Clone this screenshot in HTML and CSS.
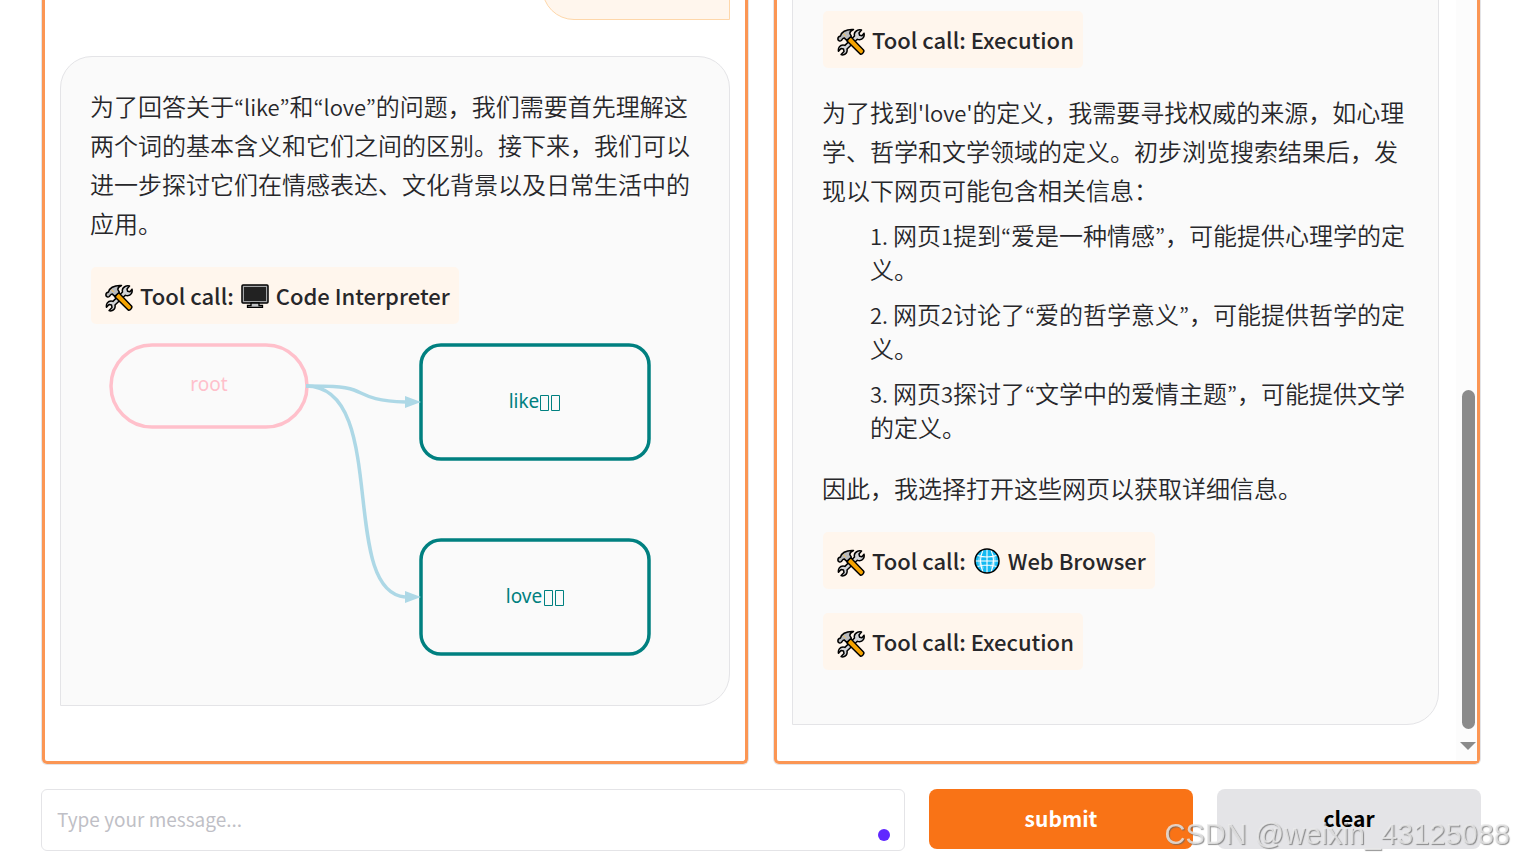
FILE: index.html
```html
<!DOCTYPE html>
<html lang="zh-CN">
<head>
  <meta charset="UTF-8" />
  <meta name="viewport" content="width=device-width, initial-scale=1.0" />
  <title>Chat</title>
  <link rel="stylesheet" href="styles.css">
</head>
<body>
  <svg class="defs" aria-hidden="true">
    <symbol id="tools" viewBox="0 0 28 28">
      <path d="M20 2.500c2-1.200 4.500-.5 4.500-.5L22 5l.6 2.200 2.400.5 2-2.500c.8 3-1 6.500-4.500 6.500-1 0-1.500-.2-2.200-.4L10 21c.6 3-1 5.800-4.300 5.900-1 0-1.600-.3-1.600-.3L7 23.500 6.500 21 4 20.500l-2.500 2.800c-.7-3.500 1.400-6.300 4.500-6.300.8 0 1.400.2 1.900.4L17.500 8c-.6-2.500.6-4.500 2.500-5.500z" fill="#d3d5d8" stroke="#000" stroke-width="1.500" stroke-linejoin="round"/>
      <path d="M11 11.500l2.800-2.700L26.500 22c1.300 1.500-1.300 4.800-3.300 4L10 13z" fill="#f5a300" stroke="#000" stroke-width="1.500" stroke-linejoin="round"/>
      <path d="M12.500 10.500L24.500 23" stroke="#f5a300" stroke-width="2.500"/>
      <path d="M1 11.500C.5 9.500 2 8.500 3.500 8c.5-3.500 5-7 13-6.500-2 .8-4 2-3.600 4.200l1.400 2.500-4.500 4.200-2.700-2.500c-1.500 0-1.600 1.200-2.800 2.600-1.300 1-3 .3-3.300-1z" fill="#b8babd" stroke="#000" stroke-width="1.500" stroke-linejoin="round"/>
      <path d="M6 5.500l3 2.500" stroke="#f5c35b" stroke-width="1"/>
    </symbol>
    <symbol id="desktop" viewBox="0 0 28 28">
      <rect x="1" y="3" width="26" height="18" rx="1" fill="#a5a7a9" stroke="#000" stroke-width="1.500"/>
      <rect x="3" y="5" width="22" height="14" fill="#222"/>
      <path d="M10 21h8v2.500h3.500v1.800h-15v-1.800H10z" fill="#c0c2c4" stroke="#000" stroke-width="1.300"/>
    </symbol>
    <symbol id="globe" viewBox="0 0 28 28">
      <circle cx="14" cy="14" r="12" fill="#14baf2"/>
      <path d="M9 6l-4 6 .5 5 4.500 5 1-1-4-8zM20 7l3 4-1 7-4 4-1-3 3-6z" fill="#6bd5f8"/>
      <path d="M14 2v24M2 14h24M4.500 8.500q9.500 3 19 0M4.500 19.500q9.500-3 19 0M10 3q-5 11 0 22M18 3q5 11 0 22" fill="none" stroke="#fff" stroke-width="1.100"/>
      <circle cx="14" cy="14" r="12" fill="none" stroke="#000" stroke-width="1.500"/>
    </symbol>
  </svg>

  <main class="chats">
    <section class="panel">
      <div class="messages">
        <div class="bubble user"></div>
        <div class="bubble bot">
          <p>为了回答关于<span class="en" lang="en">“like”</span>和<span class="en" lang="en">“love”</span>的问题，我们需要首先理解这两个词的基本含义和它们之间的区别。接下来，我们可以进一步探讨它们在情感表达、文化背景以及日常生活中的应用。</p>
          <div class="tool">
            <svg class="icon low"><use href="#tools"/></svg>
            <span>Tool call:</span>
            <svg class="icon"><use href="#desktop"/></svg>
            <span>Code Interpreter</span>
          </div>
          <svg class="graph" viewBox="0 0 610 351" role="img" aria-label="root, like, love">
            <rect class="root" x="21" y="21" width="196" height="82" rx="41"/>
            <text class="root-text" x="119" y="67">root</text>
            <rect class="leaf" x="331" y="21" width="228" height="114" rx="20"/>
            <text class="leaf-text" x="434" y="84">like</text>
            <path class="tofu" d="M450.500 71.500h8v15h-8zM461.500 71.500h8v15h-8z"/>
            <rect class="leaf" x="331" y="216" width="228" height="114" rx="20"/>
            <text class="leaf-text" x="434" y="279">love</text>
            <path class="tofu" d="M454.500 266.500h8v15h-8zM465.500 266.500h8v15h-8z"/>
            <path class="edge" d="M216 62C236 62 253 62 264 66S280 77 315 78"/>
            <path class="edge" d="M216 62C300 62 248 267 315 273"/>
            <path class="arrow" d="M315 72l16 6-16 6zM315 267l16 6-16 6z"/>
          </svg>
        </div>
      </div>
    </section>

    <section class="panel scrolled">
      <div class="messages">
        <div class="bubble bot">
          <div class="tool">
            <svg class="icon low"><use href="#tools"/></svg>
            <span>Tool call: Execution</span>
          </div>
          <p class="intro">为了找到<span class="en" lang="en">'love'</span>的定义，我需要寻找权威的来源，如心理学、哲学和文学领域的定义。初步浏览搜索结果后，发现以下网页可能包含相关信息：</p>
          <ol>
            <li>网页<span class="en" lang="en">1</span>提到<span class="en" lang="en">“</span>爱是一种情感<span class="en" lang="en">”</span>，可能提供心理学的定义。</li>
            <li>网页<span class="en" lang="en">2</span>讨论了<span class="en" lang="en">“</span>爱的哲学意义<span class="en" lang="en">”</span>，可能提供哲学的定义。</li>
            <li>网页<span class="en" lang="en">3</span>探讨了<span class="en" lang="en">“</span>文学中的爱情主题<span class="en" lang="en">”</span>，可能提供文学的定义。</li>
          </ol>
          <p>因此，我选择打开这些网页以获取详细信息。</p>
          <div class="tool">
            <svg class="icon low"><use href="#tools"/></svg>
            <span>Tool call:</span>
            <svg class="icon"><use href="#globe"/></svg>
            <span>Web Browser</span>
          </div>
          <div class="tool">
            <svg class="icon low"><use href="#tools"/></svg>
            <span>Tool call: Execution</span>
          </div>
        </div>
      </div>
      <div class="scrollbar">
        <div class="thumb"></div>
        <div class="down"></div>
      </div>
    </section>
  </main>

  <form class="composer">
    <div class="field">
      <input type="text" placeholder="Type your message..." aria-label="Message" />
      <span class="dot"></span>
    </div>
    <button class="btn submit" type="button">submit</button>
    <button class="btn clear" type="button">clear</button>
  </form>

  <div class="watermark">CSDN @weixin_43125088</div>
</body>
</html>
```
FILE: styles.css
```css
* {
  box-sizing: border-box;
}
body {
  margin: 0;
  height: 100vh;
  padding: 0 33px 10px 41px;
  display: flex;
  flex-direction: column;
  gap: 24px;
  overflow: hidden;
  background: white;
  color: #27272a;
  font-family: "Noto Sans CJK SC", sans-serif;
  font-size: 24px;
}
.defs {
  display: none;
}
.chats {
  flex: 1;
  min-height: 0;
  display: grid;
  grid-template-columns: 1fr 1fr;
  grid-template-rows: 100%;
  gap: 24px;
}

/* chat panels, scrolled to the last message */
.panel {
  display: flex;
  min-width: 0;
  border: 3px solid #fb9654;
  border-top: 0;
  border-radius: 0 0 5px 5px;
  margin: 0 1px 1px;
  box-shadow: 0 0 0 1px #e4e4e7;
}
.messages {
  flex: 1;
  min-width: 0;
  display: flex;
  flex-direction: column;
  justify-content: flex-end;
  gap: 36px;
  padding: 0 15px 55px;
  overflow: hidden;
}
.scrolled .messages {
  padding: 0 17px 36px 15px;
}
.bubble {
  flex: none;
  border: 1px solid #e4e4e7;
  background: #fafafa;
}
.user {
  align-self: flex-end;
  width: 188px;
  height: 98px;
  border-color: #fed7aa;
  background: #fff6ed;
  border-radius: 32px 32px 0 32px;
}
.bot {
  padding: 29px 29px 30px;
  border-radius: 32px 32px 32px 0;
}
/* the top of this one is scrolled out of view */
.scrolled .bot {
  padding-top: 60px;
}
.bubble p {
  margin: 0 0 25px;
  font-weight: 350;
  line-height: 39px;
  text-spacing-trim: space-all;
}
.bubble .intro {
  margin-bottom: 9px;
}
.en {
  font-family: "Noto Sans CJK KR", sans-serif;
  font-size: 22px;
  font-weight: 350;
  line-height: 24px;
}
ol {
  margin: 0 0 25px;
  padding-left: 48px;
  list-style-position: inside;
  font-weight: 350;
  line-height: 33px;
  text-spacing-trim: space-all;
}
li + li {
  margin-top: 12px;
}
li::marker {
  font-size: 22px;
}
.tool {
  display: flex;
  align-items: center;
  gap: 7px;
  width: fit-content;
  height: 57px;
  margin: 0 1px 24px;
  padding: 0 9px 0 14px;
  border-radius: 5px;
  background: #fff6ed;
  font-size: 22px;
  font-weight: 500;
}
.tool span {
  padding-bottom: 2px;
}
.icon {
  width: 28px;
  height: 28px;
}
.low {
  margin-top: 4px;
}

/* mind map */
.graph {
  display: block;
  width: 100%;
  margin-top: -24px;
  font-family: "Noto Sans", sans-serif;
  font-size: 19px;
}
.graph rect {
  fill: none;
  stroke-width: 3.5px;
}
.root {
  stroke: pink;
}
.leaf {
  stroke: teal;
}
.root-text {
  fill: pink;
  text-anchor: middle;
}
.leaf-text {
  fill: teal;
  text-anchor: middle;
}
.tofu {
  fill: none;
  stroke: teal;
}
.edge {
  fill: none;
  stroke: lightblue;
  stroke-width: 3.5px;
}
.arrow {
  fill: lightblue;
}

.scrollbar {
  width: 21px;
  display: flex;
  flex-direction: column;
  justify-content: flex-end;
  align-items: center;
  gap: 13px;
  padding: 0 0 11px 3px;
  background: #fcfcfc;
}
.thumb {
  width: 13px;
  height: 339px;
  border-radius: 7px;
  background: #8b8b8b;
}
.down {
  border: 8px solid transparent;
  border-top-color: #8b8b8b;
  border-bottom: 0;
}

.composer {
  display: grid;
  grid-template-columns: 36fr 11fr 11fr;
  align-items: start;
  gap: 24px;
}
.field {
  position: relative;
}
input {
  display: block;
  width: 100%;
  height: 62px;
  padding: 0 15px 3px;
  border: 1px solid #e4e4e7;
  border-radius: 6px;
  font-family: inherit;
  font-size: 19px;
}
input::placeholder {
  color: #bfbfc6;
}
.dot {
  position: absolute;
  right: 15px;
  bottom: 10px;
  width: 12px;
  height: 12px;
  border-radius: 50%;
  background: #6028ff;
}
.btn {
  height: 60px;
  padding: 0 0 2px;
  border: 0;
  border-radius: 8px;
  font-family: inherit;
  font-size: 21px;
  font-weight: bold;
}
.submit {
  background: #f97316;
  color: white;
}
.clear {
  background: #e4e4e7;
  color: black;
}
.watermark {
  position: fixed;
  right: 4px;
  bottom: 10px;
  color: rgba(235, 235, 235, 0.8);
  font-family: "Liberation Sans", Arial, sans-serif;
  font-size: 29px;
  text-shadow: 1px 1px 1px rgba(100, 100, 100, 0.7);
}
```
